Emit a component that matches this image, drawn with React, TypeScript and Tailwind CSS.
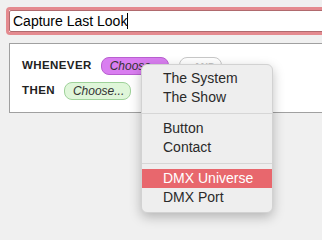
import React from "react";

export default function App() {
  const font = { fontFamily: "'Liberation Sans', Arial, sans-serif" };
  return (
    <div className="relative w-[322px] h-[240px] overflow-hidden bg-[#f0f0f0]" style={font}>
      <div className="pl-[6px] pt-[7px]">
        <div className="w-[330px] h-[28px] rounded-[4px] border-[3px] border-[#e48a8f] bg-white">
          <div className="h-full border border-[#b06a6e] rounded-[2px] flex items-center pl-[3px] text-[14px] text-black">
            Capture Last Look<span className="inline-block w-px h-[16px] bg-black" />
          </div>
        </div>
      </div>
      <div className="ml-[9px] mt-[8px] w-[330px] h-[70px] bg-white border border-[#a0a0a0] flex flex-col gap-[7px] pl-[12px] pt-[13px]">
        <div className="flex items-center gap-[9px]">
          <span className="text-[11.5px] font-bold text-[#222] tracking-[0.4px]">WHENEVER</span>
          <span className="h-[18px] w-[68px] rounded-[8px] bg-[#d97ef0] border border-[#b95fd0] text-[12px] italic text-[#333] flex items-center pl-[8px]">Choose...</span>
          <span className="h-[18px] w-[43px] rounded-[8px] border border-[#c8c8c8] text-[10px] font-bold text-[#c4c4c4] flex items-start pt-[2px] justify-center ml-[1px]">+ AND</span>
        </div>
        <div className="flex items-center gap-[9px]">
          <span className="text-[11.5px] font-bold text-[#222] tracking-[0.4px]">THEN</span>
          <span className="h-[18px] w-[67px] rounded-[8px] bg-[#dff6d9] border border-[#9fd29a] text-[12px] italic text-[#333] flex items-center pl-[8px]">Choose...</span>
        </div>
      </div>
      <div className="absolute left-[141px] top-[64px] w-[132px] rounded-[6px] bg-[#eeeeee] border border-[#d2d2d2] shadow-[0_4px_12px_rgba(0,0,0,0.25)] pt-[4px] pb-[5px] text-[14px] text-[#2a2a2a]">
        <div className="h-[19px] flex items-center pl-[21px]">The System</div>
        <div className="h-[19px] flex items-center pl-[21px]">The Show</div>
        <div className="h-[12px] flex items-center"><div className="w-full h-px bg-[#d6d6d6]" /></div>
        <div className="h-[19px] flex items-center pl-[21px]">Button</div>
        <div className="h-[19px] flex items-center pl-[21px]">Contact</div>
        <div className="h-[12px] flex items-center"><div className="w-full h-px bg-[#d6d6d6]" /></div>
        <div className="h-[19px] flex items-center pl-[21px] bg-[#e8676d] text-white">DMX Universe</div>
        <div className="h-[19px] flex items-center pl-[21px]">DMX Port</div>
      </div>
    </div>
  );
}
